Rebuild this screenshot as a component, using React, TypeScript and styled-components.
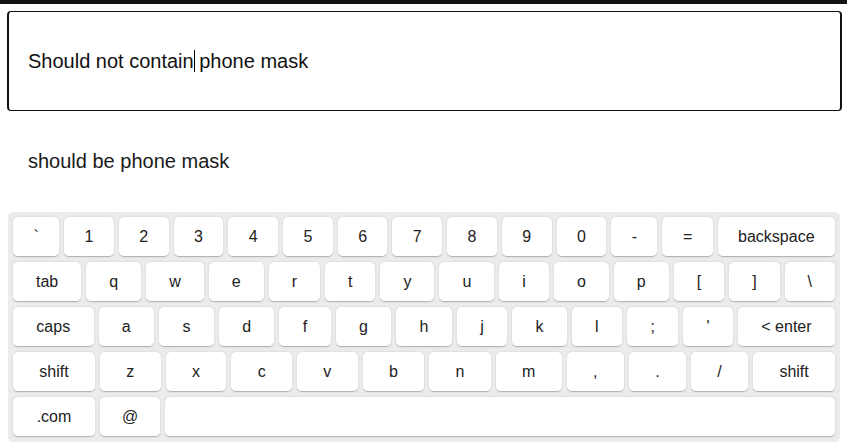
import { createGlobalStyle } from "styled-components";
import styled from "styled-components";

type KeyDef = {
  label: string
  maxWidth?: number
}

const GlobalStyle = createGlobalStyle`
  html, body {
    margin: 0;
    padding: 0;
    background: #fff;
  }
  body {
    font-family: "Liberation Sans", Arial, sans-serif;
    color: #111;
  }
`

const TopBar = styled.div`
  height: 4px;
  background: #141414;
`

const Page = styled.div`
  padding: 7px 5px 0 7px;
`

const Field = styled.div`
  box-sizing: border-box;
  height: 100px;
  display: flex;
  align-items: center;
  padding: 0 19px;
  border: 1px solid #111;
  border-left-width: 2px;
  border-right-width: 2px;
  border-radius: 4px;
  font-size: 20px;
  color: #111;
  white-space: pre;
`

const Caret = styled.span`
  display: inline-block;
  width: 1px;
  margin-right: -1px;
  height: 22px;
  background: #000;
  vertical-align: -4px;
`

const Label = styled.div`
  margin: 39px 0;
  padding-left: 21px;
  font-size: 20px;
  line-height: 23px;
  color: #1a1a1a;
`

const Keyboard = styled.div`
  box-sizing: border-box;
  width: 832px;
  margin-left: 1px;
  padding: 5px;
  border-radius: 5px;
  background: #ececec;
  font-size: 16px;
  color: #222;
  user-select: none;
`

const Row = styled.div`
  display: flex;
  gap: 5px;
  &:not(:last-child) {
    margin-bottom: 5px;
  }
`

const Key = styled.div<{ $max?: number }>`
  box-sizing: border-box;
  flex: 1 1 auto;
  height: 40px;
  padding: 5px;
  display: flex;
  align-items: center;
  justify-content: center;
  background: #fff;
  border-radius: 5px;
  border-bottom: 1px solid #b5b5b5;
  box-shadow: 0 0 3px -1px rgba(0, 0, 0, 0.3);
  white-space: pre;
  max-width: ${(p) => (p.$max ? `${p.$max}px` : "none")};
`

const rows: KeyDef[][] = [
  "` 1 2 3 4 5 6 7 8 9 0 - = backspace".split(" ").map((label) => ({ label })),
  "tab q w e r t y u i o p [ ] \\".split(" ").map((label) => ({ label })),
  [...("caps a s d f g h j k l ; '".split(" ").map((label) => ({ label }))), { label: "< enter" }],
  "shift z x c v b n m , . / shift".split(" ").map((label) => ({ label })),
  [{ label: ".com", maxWidth: 82 }, { label: "@", maxWidth: 60 }, { label: " " }],
]

export default function App() {
  return (
    <>
      <GlobalStyle />
      <TopBar />
      <Page>
        <Field>
          Should not contain<Caret /> phone mask
        </Field>
        <Label>should be phone mask</Label>
        <Keyboard>
          {rows.map((row, i) => (
            <Row key={i}>
              {row.map((k, j) => (
                <Key key={j} $max={k.maxWidth}>
                  {k.label}
                </Key>
              ))}
            </Row>
          ))}
        </Keyboard>
      </Page>
    </>
  )
}
